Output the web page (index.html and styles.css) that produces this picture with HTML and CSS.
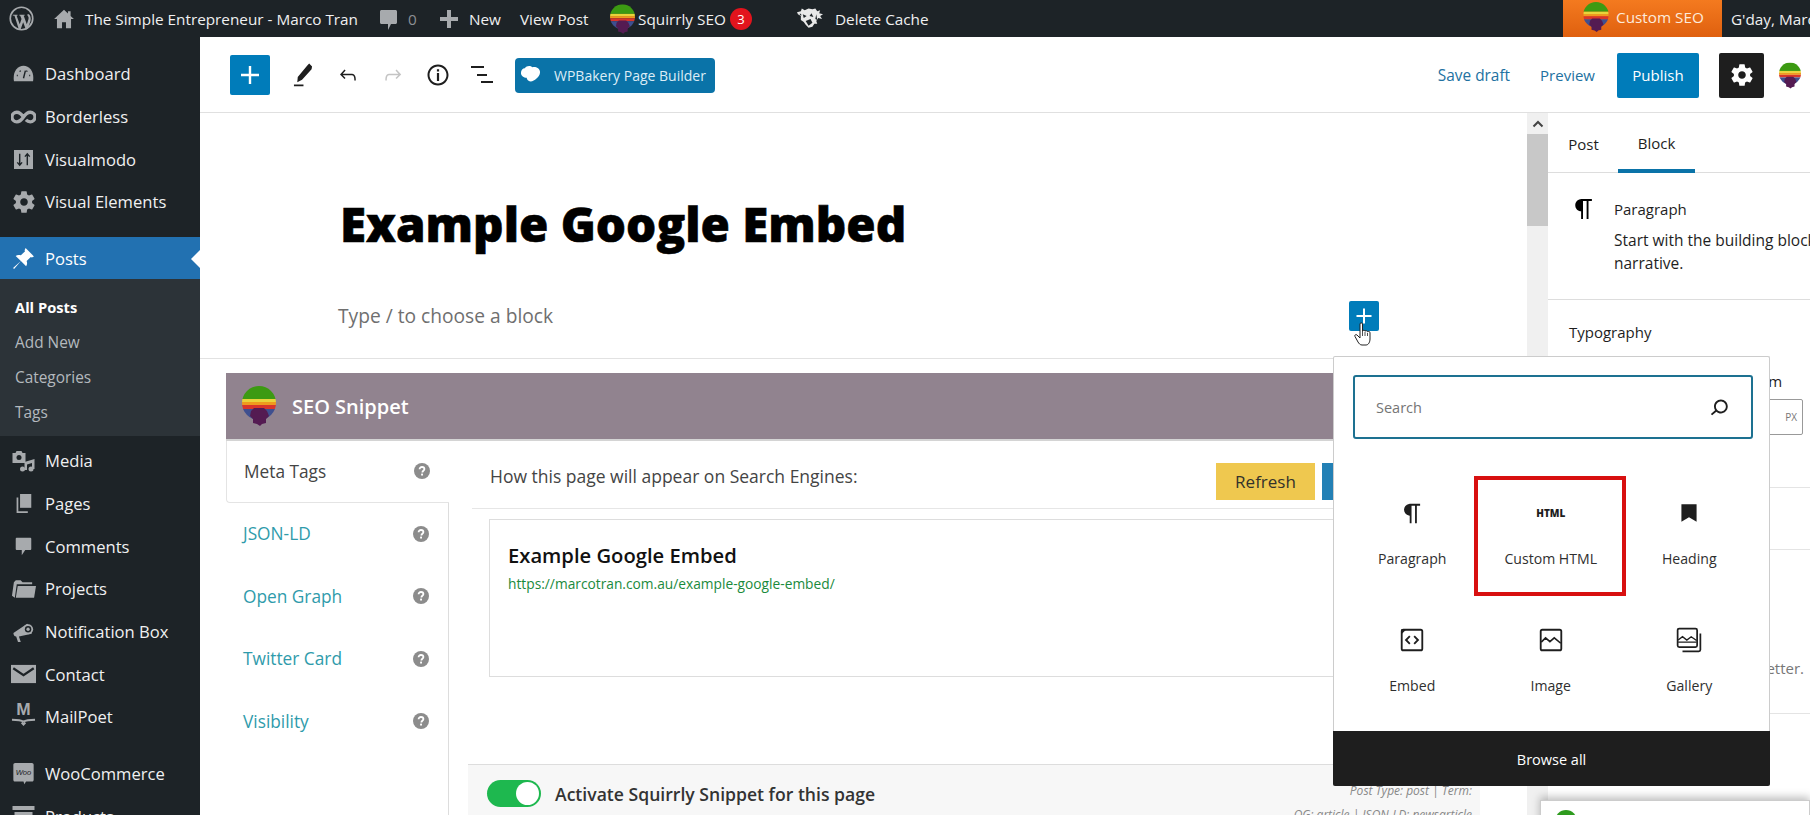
FILE: index.html
```html
<!DOCTYPE html>
<html lang="en">
<head>
  <meta charset="UTF-8">
  <title>Edit Post</title>
  <link rel="stylesheet" href="styles.css">
</head>
<body>
  <svg class="defs" width="0" height="0">
    <defs>
      <clipPath id="logoClip"><circle cx="17" cy="17" r="17"/></clipPath>
      <symbol id="squirrly" viewBox="0 0 34 40">
        <g clip-path="url(#logoClip)">
          <rect width="34" height="13" fill="#3c9a12"/>
          <rect y="13" width="34" height="3" fill="#e9d33a"/>
          <rect y="16" width="34" height="3" fill="#ee9a1e"/>
          <rect y="19" width="34" height="4" fill="#d8352a"/>
          <rect y="23" width="34" height="11" fill="#3f4f8f"/>
        </g>
        <path d="M9 25l3-3h10l3 3 2 5-3 3v4l-4 1-2 2-3-2-4-1v-4l-3-3z" fill="#541b52"/>
      </symbol>
      <symbol id="cog" viewBox="0 0 24 24">
        <path d="M19.43 12.98c.04-.32.07-.64.07-.98s-.03-.66-.07-.98l2.11-1.65c.19-.15.24-.42.12-.64l-2-3.46c-.12-.22-.39-.3-.61-.22l-2.49 1c-.52-.4-1.08-.73-1.69-.98l-.38-2.65C14.46 2.18 14.25 2 14 2h-4c-.25 0-.46.18-.49.42l-.38 2.65c-.61.25-1.17.59-1.69.98l-2.49-1c-.23-.09-.49 0-.61.22l-2 3.46c-.13.22-.07.49.12.64l2.11 1.65c-.04.32-.07.65-.07.98s.03.66.07.98l-2.11 1.65c-.19.15-.24.42-.12.64l2 3.46c.12.22.39.3.61.22l2.49-1c.52.4 1.08.73 1.69.98l.38 2.65c.03.24.24.42.49.42h4c.25 0 .46-.18.49-.42l.38-2.65c.61-.25 1.17-.59 1.69-.98l2.49 1c.23.09.49 0 .61-.22l2-3.46c.12-.22.07-.49-.12-.64l-2.11-1.65zM12 15.5c-1.93 0-3.5-1.57-3.5-3.5s1.57-3.5 3.5-3.5 3.5 1.57 3.5 3.5-1.57 3.5-3.5 3.5z"/>
      </symbol>
      <symbol id="para" viewBox="0 0 24 24">
        <path d="M18.3 4H9.9v-.1l-.9.2c-2.3.4-4 2.4-4 4.8s1.7 4.4 4 4.8l.7.1V20h1.5V5.5h2.9V20h1.5V5.5h2.7V4z"/>
      </symbol>
      <symbol id="help" viewBox="0 0 16 16">
        <circle cx="8" cy="8" r="8" fill="#8c8c8c"/>
        <path d="M5.6 6.2c0-1.4 1-2.2 2.4-2.2s2.4.8 2.4 2c0 1.8-2 1.7-2 3.4" fill="none" stroke="#fff" stroke-width="1.8"/>
        <rect x="7.1" y="10.6" width="1.9" height="1.9" fill="#fff"/>
      </symbol>
      <symbol id="plus" viewBox="0 0 24 24">
        <path d="M18 11.2h-5.2V6h-1.6v5.2H6v1.6h5.2V18h1.6v-5.2H18z"/>
      </symbol>
    </defs>
  </svg>

  <header class="adminbar">
    <svg class="ab-wp" viewBox="0 0 24 24"><circle cx="12" cy="12" r="10.8" fill="none" stroke="#a7aaad" stroke-width="1.6"/><path d="M3.6 8.4h4.6l.1.7-1 .2 3 8.2 1.7-5-1.2-3.2-.9-.2v-.7h5.2v.7l-1 .2 3 8.2 1.500-4.600c.7-2-.2-3-.8-3.800-.4-.6-.2-1.400.7-1.400l1.400 1c1.200 2.200 1.200 4.400.6 6.300l-2.600 7.200-1.700.4-2.600-7-2.500 7-1.700-.2L5.300 9.300l-1.700-.2z" fill="#a7aaad"/></svg>
    <svg class="ab-home" viewBox="0 0 20 20"><path d="M10 1.500L1 10h2.600v8.500h4.600v-5.500h3.600v5.500h4.600V10H19l-3-2.800V3h-2.400v2z" fill="#a7aaad"/></svg>
    <span class="ab-title">The Simple Entrepreneur - Marco Tran</span>
    <svg class="ab-comment" viewBox="0 0 17 20"><path d="M1.500 0h14c.8 0 1.500.7 1.500 1.500v11c0 .8-.7 1.500-1.500 1.500H11l-3 6v-6H1.500C.7 14 0 13.300 0 12.500v-11C0 .7.700 0 1.500 0z" fill="#a7aaad"/></svg>
    <span class="ab-count">0</span>
    <svg class="ab-plus" viewBox="0 0 18 18"><path d="M7 0h4v7h7v4h-7v7H7v-7H0V7h7z" fill="#a7aaad"/></svg>
    <span class="ab-new">New</span>
    <span class="ab-view">View Post</span>
    <svg class="ab-logo"><use href="#squirrly"/></svg>
    <span class="ab-squirrly">Squirrly SEO</span>
    <span class="ab-badge">3</span>
    <svg class="ab-tiger" viewBox="0 0 28 22"><path d="M0 4l4-1 1-3 3 2 4-2 4 1 3-1 2 3 3-1-1 3 4 1-3 2 2 3-4-1-2 3 1 3-3 0-2 3-4 1-3-3-2-3-3-2 0-4-3-2z" fill="#e8e8e8"/><path d="M6 6l4 2-3 2zM15 5l-2 3 4 1zM9 13l5-2 2 4-4 3zM20 6l1 6-2-1zM3 5l2 2-2 0z" fill="#1d2327"/></svg>
    <span class="ab-cache">Delete Cache</span>
    <div class="ab-right">
      <div class="ab-custom">
        <svg class="ab-custom-logo"><use href="#squirrly"/></svg>
        <span>Custom SEO</span>
      </div>
      <span class="ab-user">G'day, Marco Tran</span>
    </div>
  </header>

  <div class="layout">
    <nav class="sidebar">
      <a class="nav-item">
        <svg class="nav-icon" viewBox="0 0 22 18"><path d="M1 17C-.5 8 4 1 11 1s11.500 7 10 16z" fill="#a7aaad"/><path d="M11 14l2-8M4 11h1M17 11h1M7 6l1 1M15 6l-1 1" stroke="#1d2327" stroke-width="1.500"/></svg>
        Dashboard
      </a>
      <a class="nav-item">
        <svg class="nav-icon nav-icon-wide" viewBox="0 0 26 14"><path d="M13 7c-2-3-4-5-7-5a5 5 0 0 0 0 10c3 0 5-2 7-5s4-5 7-5a5 5 0 0 1 0 10c-2 0-3.500-1-4.500-2" fill="none" stroke="#a7aaad" stroke-width="3.500"/></svg>
        Borderless
      </a>
      <a class="nav-item">
        <svg class="nav-icon" viewBox="0 0 20 20"><rect width="20" height="20" fill="#a7aaad"/><path d="M6 4v12M3.500 13L6 16l2.500-3M14 16V4M11.500 7L14 4l2.500 3" fill="none" stroke="#1d2327" stroke-width="1.500"/></svg>
        Visualmodo
      </a>
      <a class="nav-item">
        <svg class="nav-icon nav-icon-gear"><use href="#cog"/></svg>
        Visual Elements
      </a>
      <a class="nav-item is-current">
        <svg class="nav-icon nav-icon-pin" viewBox="0 0 22 22"><path d="M13 1l8 8-2 1-1-.500-4 4c.8 2 .5 3.500-.5 5L8.500 13.500 2 21l-1-1 7.500-6.500L3.500 8.500c1.500-1 3-1.300 5-.5l4-4-.5-1z" fill="#fff"/></svg>
        Posts
      </a>
      <div class="nav-sub">
        <a class="sub-item is-active">All Posts</a>
        <a class="sub-item">Add New</a>
        <a class="sub-item">Categories</a>
        <a class="sub-item">Tags</a>
      </div>
      <a class="nav-item nav-media">
        <svg class="nav-icon nav-icon-wide" viewBox="0 0 24 22"><path d="M1 3h3l1-2h5l1 2h3v10H1z" fill="#a7aaad"/><circle cx="7.500" cy="7.500" r="2.500" fill="#1d2327"/><path d="M13 12l10-3v10h-2.500v-6l-5 1.500V20h-2.500z" fill="#a7aaad"/><circle cx="11" cy="19" r="2.500" fill="#a7aaad"/><circle cx="19.500" cy="19" r="2.500" fill="#a7aaad"/></svg>
        Media
      </a>
      <a class="nav-item">
        <svg class="nav-icon" viewBox="0 0 20 22"><path d="M6 0h13v16H6z" fill="#a7aaad"/><path d="M3 4v17h12" fill="none" stroke="#a7aaad" stroke-width="2"/></svg>
        Pages
      </a>
      <a class="nav-item">
        <svg class="nav-icon" viewBox="0 0 20 22"><path d="M2 1h16c.6 0 1 .4 1 1v12c0 .6-.4 1-1 1h-6l-4 6v-6H2c-.6 0-1-.4-1-1V2c0-.6.4-1 1-1z" fill="#a7aaad"/></svg>
        Comments
      </a>
      <a class="nav-item">
        <svg class="nav-icon nav-icon-wide" viewBox="0 0 26 20"><path d="M3 3l2-2h5l2 2h10v2H6L4 19 1 17z" fill="#a7aaad"/><path d="M7 7h19l-2 12H5z" fill="#a7aaad"/></svg>
        Projects
      </a>
      <a class="nav-item">
        <svg class="nav-icon nav-icon-wide" viewBox="0 0 24 24"><path d="M1 13l15-10c3 2 5 7 5 11L7 17l2 6H6l-2-6c-2 0-3-2-3-4z" fill="#a7aaad"/><circle cx="17" cy="9" r="5.500" fill="#a7aaad"/><circle cx="17" cy="9" r="3.500" fill="#1d2327"/><circle cx="17" cy="9" r="1.800" fill="#a7aaad"/></svg>
        Notification Box
      </a>
      <a class="nav-item">
        <svg class="nav-icon nav-icon-wide" viewBox="0 0 22 16"><rect width="22" height="16" fill="#a7aaad"/><path d="M2 3l9 6 9-6" fill="none" stroke="#1d2327" stroke-width="2"/></svg>
        Contact
      </a>
      <a class="nav-item">
        <svg class="nav-icon nav-icon-tall" viewBox="0 0 26 26"><text class="mail-m" x="13" y="15" text-anchor="middle">M</text><path d="M1 20c4 0 9 0 12 2 3-2 8-2 12-2M11 23l2 2 2-2" fill="none" stroke="#a7aaad" stroke-width="2"/></svg>
        MailPoet
      </a>
      <a class="nav-item nav-woo">
        <svg class="nav-icon nav-icon-wide" viewBox="0 0 24 26"><path d="M2 0h20c1 0 2 1 2 2v18c0 1-1 2-2 2h-7l-2 3-1-3H2c-1 0-2-1-2-2V2C0 1 1 0 2 0z" fill="#a7aaad"/><text class="woo-text" x="12" y="14" text-anchor="middle">Woo</text></svg>
        WooCommerce
      </a>
      <a class="nav-item">
        <svg class="nav-icon nav-icon-wide" viewBox="0 0 24 22"><path d="M1 1h22v4H1zM3 7h18v14H3z" fill="#a7aaad"/></svg>
        Products
      </a>
    </nav>

    <main class="main">
      <div class="toolbar">
        <button class="tool-add"><svg viewBox="0 0 24 24"><use href="#plus"/></svg></button>
        <svg class="tool-pen" viewBox="0 0 21 24"><path d="M1 22h10v1.800H1zM17 0l3 3-.5 3-10 11-5 2.500.5-5.500 10-12z"/></svg>
        <svg class="tool-icon tool-undo" viewBox="0 0 24 24"><path d="M18.300 11.700c-.6-.6-1.400-.9-2.300-.9H6.700l2.900-3.300-1.100-1-4.500 5L8.500 16l1-1-2.700-2.700H16c.5 0 .9.200 1.300.5 1 1 1 3.400 1 4.500v.3h1.500v-.2c0-1.500 0-4.300-1.500-5.700z"/></svg>
        <svg class="tool-icon tool-redo" viewBox="0 0 24 24"><path d="M15.600 6.500l-1.100 1 2.900 3.300H8c-.9 0-1.700.3-2.300.9-1.400 1.500-1.400 4.200-1.400 5.600v.2h1.500v-.3c0-1.100 0-3.500 1-4.500.3-.3.7-.5 1.300-.5h9.200L14.500 15l1.100 1.100 4.600-4.600-4.600-5z"/></svg>
        <svg class="tool-icon tool-info" viewBox="0 0 24 24"><path d="M12 1.500C6.200 1.500 1.500 6.200 1.500 12S6.200 22.500 12 22.500 22.500 17.800 22.500 12 17.800 1.500 12 1.500zm0 19c-4.700 0-8.500-3.800-8.500-8.500S7.300 3.500 12 3.500s8.500 3.800 8.500 8.500-3.800 8.500-8.500 8.500zM10.900 18h2.200v-8h-2.200zm0-9.500h2.200V6.300h-2.200z"/></svg>
        <svg class="tool-icon tool-list" viewBox="0 0 24 24"><path d="M1 3h13v2H1zM7 11h10v2H7zM11 18h12v2H11z"/></svg>
        <button class="tool-bakery">
          <svg viewBox="0 0 22 18"><path d="M5 2c2-3 6-3 8-1 3-1 8 1 8 5 0 3-2 5-4 7-2 2-6 4-8 2-1 0-2-2-2-3-3 0-6-2-6-5 0-3 2-5 4-5z" fill="#fff"/></svg>
          WPBakery Page Builder
        </button>
        <div class="tool-right">
          <a class="tool-link tool-save">Save draft</a>
          <a class="tool-link">Preview</a>
          <button class="tool-publish">Publish</button>
          <button class="tool-settings"><svg viewBox="0 0 24 24"><use href="#cog"/></svg></button>
          <svg class="tool-logo"><use href="#squirrly"/></svg>
        </div>
      </div>

      <div class="workspace">
        <div class="editor">
          <section class="post-head">
            <h1 class="post-title">Example Google Embed</h1>
            <div class="block-line">
              <span class="block-hint">Type / to choose a block</span>
              <button class="inline-add"><svg viewBox="0 0 24 24"><use href="#plus"/></svg></button>
            </div>
          </section>

          <section class="snippet">
            <div class="snippet-head">
              <svg class="snippet-logo"><use href="#squirrly"/></svg>
              <span>SEO Snippet</span>
            </div>
            <div class="snippet-body">
              <ul class="snippet-tabs">
                <li class="snippet-tab is-active">Meta Tags <svg class="help"><use href="#help"/></svg></li>
                <li class="snippet-tab">JSON-LD <svg class="help"><use href="#help"/></svg></li>
                <li class="snippet-tab">Open Graph <svg class="help"><use href="#help"/></svg></li>
                <li class="snippet-tab">Twitter Card <svg class="help"><use href="#help"/></svg></li>
                <li class="snippet-tab">Visibility <svg class="help"><use href="#help"/></svg></li>
              </ul>
              <div class="snippet-main">
                <div class="snippet-top">
                  <span class="snippet-question">How this page will appear on Search Engines:</span>
                  <div class="snippet-actions">
                    <button class="btn-refresh">Refresh</button>
                    <button class="btn-edit">Edit Snippet</button>
                  </div>
                </div>
                <div class="serp-card">
                  <div class="serp-title">Example Google Embed</div>
                  <div class="serp-url">https://marcotran.com.au/example-google-embed/</div>
                </div>
                <div class="activate-bar">
                  <span class="toggle"></span>
                  <span class="activate-label">Activate Squirrly Snippet for this page</span>
                  <div class="activate-meta">
                    <div>Post Type: post | Term:</div>
                    <div>OG: article | JSON-LD: newsarticle</div>
                  </div>
                </div>
              </div>
            </div>
          </section>
        </div>

        <div class="scrollbar">
          <div class="scroll-arrow"><svg viewBox="0 0 12 8"><path d="M1.500 6.500L6 2l4.500 4.500" fill="none" stroke="#444" stroke-width="2"/></svg></div>
          <div class="scroll-thumb"></div>
        </div>

        <aside class="panel">
          <div class="panel-tabs">
            <span class="panel-tab">Post</span>
            <span class="panel-tab is-active">Block</span>
          </div>
          <div class="panel-card">
            <svg class="panel-card-icon"><use href="#para"/></svg>
            <div>
              <div class="panel-card-name">Paragraph</div>
              <p class="panel-card-text">Start with the building block of all<br>narrative.</p>
            </div>
          </div>
          <div class="panel-section panel-type">
            <div class="panel-heading">Typography</div>
            <div class="panel-field-label">Custom</div>
            <div class="panel-field"><span>PX</span></div>
          </div>
          <div class="panel-section panel-color"></div>
          <div class="panel-section panel-adv">
            <div class="panel-adv-text">Drop cap letter.</div>
          </div>
        </aside>
      </div>
    </main>
  </div>

  <div class="inserter">
    <div class="inserter-search">
      <span>Search</span>
      <svg viewBox="0 0 24 24"><path d="M13.500 6C10.500 6 8 8.500 8 11.500c0 1.100.3 2.100.9 3l-3.400 3 1 1.100 3.400-2.900c1 .9 2.200 1.400 3.600 1.400 3 0 5.500-2.500 5.500-5.500C19 8.500 16.500 6 13.500 6zm0 9.500c-2.200 0-4-1.800-4-4s1.800-4 4-4 4 1.800 4 4-1.800 4-4 4z"/></svg>
    </div>
    <div class="inserter-grid">
      <div class="inserter-item">
        <svg class="inserter-icon icon-para"><use href="#para"/></svg>
        <span>Paragraph</span>
      </div>
      <div class="inserter-item is-marked">
        <span class="inserter-icon html-icon">HTML</span>
        <span>Custom HTML</span>
      </div>
      <div class="inserter-item">
        <svg class="inserter-icon" viewBox="0 0 24 24"><path d="M5 4h14v16l-7-4-7 4z"/></svg>
        <span>Heading</span>
      </div>
      <div class="inserter-item">
        <svg class="inserter-icon" viewBox="0 0 24 24"><rect x="2.500" y="2.500" width="19" height="19" rx="1.500" fill="none" stroke="#1e1e1e" stroke-width="1.700"/><path d="M2 2h5L2 7z"/><path d="M10 8.500L6.500 12l3.500 3.500M14 8.500l3.500 3.500-3.500 3.500" fill="none" stroke="#1e1e1e" stroke-width="1.700"/></svg>
        <span>Embed</span>
      </div>
      <div class="inserter-item">
        <svg class="inserter-icon" viewBox="0 0 24 24"><rect x="2.500" y="2.500" width="19" height="19" rx="1.500" fill="none" stroke="#1e1e1e" stroke-width="1.700"/><path d="M3 14l4-4 4 3.500 4-3.500 6 5" fill="none" stroke="#1e1e1e" stroke-width="1.500"/></svg>
        <span>Image</span>
      </div>
      <div class="inserter-item">
        <svg class="inserter-icon" viewBox="0 0 24 24"><rect x="1.500" y="1.500" width="18" height="17" rx="1.500" fill="none" stroke="#1e1e1e" stroke-width="1.600"/><path d="M2 12l4-3 4 3 4-3 5 3.500M2 14h17" fill="none" stroke="#1e1e1e" stroke-width="1.300"/><path d="M22.500 6v15c0 .8-.5 1.500-1.500 1.500H6" fill="none" stroke="#1e1e1e" stroke-width="1.600"/></svg>
        <span>Gallery</span>
      </div>
    </div>
    <button class="inserter-browse">Browse all</button>
  </div>

  <svg class="hand-cursor" viewBox="0 0 18 24"><path d="M6 2c0-1.500 2.500-1.500 2.500 0v7c.5-1 2.500-1 2.500.3.500-1 2.500-.8 2.500.5.800-.8 2.500-.5 2.500 1V17c0 3-1.500 6-4 6H8c-2 0-3-1.500-4-3L1 14.500c-.8-1.500 1-2.500 2-1.500l3 3z" fill="#fff" stroke="#222" stroke-width="1"/><path d="M8.500 9v5M11 10v4M13.500 11v3" stroke="#222" stroke-width=".8"/></svg>

  <div class="notice"><span class="notice-dot"></span></div>
</body>
</html>
```

FILE: styles.css
```css
* {
  box-sizing: border-box;
}
html, body {
  height: 815px;
  overflow: hidden;
}
body {
  margin: 0;
  font-family: "Open Sans", "Noto Sans", sans-serif;
  background: #fff;
  color: #1e1e1e;
}
button {
  font-family: inherit;
  border: none;
  cursor: pointer;
}
.defs {
  position: absolute;
}

/* admin bar */
.adminbar {
  display: flex;
  align-items: center;
  height: 37px;
  background: #1d2327;
  color: #f0f0f1;
  font-size: 15.300px;
  white-space: nowrap;
}
.ab-wp { width: 25px; height: 25px; margin-left: 9px; }
.ab-home { width: 22px; height: 22px; margin-left: 19px; }
.ab-title { margin-left: 10px; width: 274px; }
.ab-comment { width: 17px; height: 20px; margin-left: 21px; margin-top: 2px; }
.ab-count { margin-left: 11px; color: #8c8f94; width: 10px; }
.ab-plus { width: 18px; height: 18px; margin-left: 22px; }
.ab-new { margin-left: 11px; width: 33px; }
.ab-view { margin-left: 18px; width: 70px; }
.ab-logo { width: 25px; height: 30px; margin-left: 20px; }
.ab-squirrly { margin-left: 3px; width: 88px; }
.ab-badge {
  display: flex;
  align-items: center;
  justify-content: center;
  width: 22px;
  height: 22px;
  margin-left: 4px;
  border-radius: 50%;
  background: #e2141d;
  color: #fff;
  font-size: 13px;
}
.ab-tiger { width: 27px; height: 22px; margin-left: 45px; }
.ab-cache { margin-left: 11px; }
.ab-right {
  display: flex;
  align-items: center;
  margin-left: auto;
  width: 247px;
  overflow: hidden;
}
.ab-custom {
  display: flex;
  align-items: center;
  flex: none;
  gap: 7px;
  width: 159px;
  height: 37px;
  padding-left: 20px;
  background: linear-gradient(#f47a1f, #df600f);
  color: #fdeadb;
  padding-bottom: 3px;
}
.ab-custom-logo { width: 26px; height: 30px; }
.ab-user { margin-left: 9px; }

.layout {
  display: flex;
  height: 778px;
}

/* left menu */
.sidebar {
  flex: none;
  width: 200px;
  padding-top: 15.500px;
  background: #1d2327;
  color: #f0f0f1;
  overflow: hidden;
}
.nav-item {
  display: flex;
  align-items: center;
  height: 42.7px;
  font-size: 16.600px;
  position: relative;
}
.nav-icon {
  flex: none;
  width: 21px;
  height: 19px;
  margin: 0 11px 0 13px;
}
.nav-icon-wide {
  width: 25px;
  height: 22px;
  margin: 0 9px 0 11px;
}
.nav-icon-tall {
  width: 25px;
  height: 28px;
  margin: -8px 9px 0 11px;
}
.nav-icon-gear {
  width: 26px;
  height: 26px;
  margin: 0 8px 0 11px;
  fill: #a7aaad;
}
.nav-icon-pin {
  width: 23px;
  height: 23px;
  margin: 0 10px 0 12px;
}
.nav-item.is-current {
  margin-top: 13.500px;
  background: #2271b1;
  color: #fff;
}
.nav-item.is-current::after {
  content: "";
  position: absolute;
  right: 0;
  top: 13px;
  border: 9px solid transparent;
  border-right-color: #fff;
  border-left: none;
}
.nav-sub {
  padding: 10.500px 0 6.500px;
  background: #2c3338;
}
.sub-item {
  display: flex;
  align-items: center;
  height: 35px;
  padding-left: 15px;
  font-size: 15.400px;
  color: #b4b9be;
}
.sub-item.is-active {
  font-size: 14.700px;
  font-weight: 700;
  color: #fff;
}
.nav-media { margin-top: 3px; }
.nav-woo { margin-top: 14px; }
.mail-m {
  font-family: "Liberation Sans", sans-serif;
  font-weight: 700;
  font-size: 18px;
  fill: #a7aaad;
}
.woo-text {
  font-family: "Liberation Sans", sans-serif;
  font-style: italic;
  font-size: 9px;
  fill: #1d2327;
}

.main {
  flex: 1;
  min-width: 0;
  display: flex;
  flex-direction: column;
}

/* editor toolbar */
.toolbar {
  display: flex;
  align-items: center;
  flex: none;
  height: 76px;
  padding-left: 30px;
  border-bottom: 1px solid #e0e0e0;
}
.tool-add {
  display: flex;
  align-items: center;
  justify-content: center;
  width: 40px;
  height: 40px;
  padding: 0;
  border-radius: 2px;
  background: #007cba;
}
.tool-add svg { width: 36px; height: 36px; fill: #fff; }
.tool-icon { width: 24px; height: 24px; fill: #1e1e1e; flex: none; }
.tool-pen { flex: none; width: 20px; height: 24px; margin-left: 23px; fill: #1e1e1e; }
.tool-undo { margin-left: 23px; }
.tool-redo { margin-left: 21px; fill: #c4c4c4; }
.tool-info { margin-left: 21px; }
.tool-list { margin-left: 20px; }
.tool-bakery {
  display: flex;
  align-items: center;
  gap: 13px;
  width: 200px;
  height: 35px;
  margin: 1px 0 0 21px;
  padding: 0 0 0 5px;
  border-radius: 4px;
  background: #0a73a8;
  color: #dcedf6;
  font-size: 14px;
}
.tool-bakery svg { width: 21px; height: 18px; flex: none; }
.tool-right {
  display: flex;
  align-items: center;
  margin: 1px 0 0 auto;
}
.tool-link {
  color: #2271a1;
  font-size: 15px;
  margin-right: 22px;
}
.tool-save { margin-right: 30px; font-size: 15.400px; }
.tool-publish {
  width: 82px;
  height: 45px;
  margin-right: 20px;
  border-radius: 2px;
  background: #007cba;
  color: #fff;
  font-size: 15px;
}
.tool-settings {
  display: flex;
  align-items: center;
  justify-content: center;
  width: 45px;
  height: 45px;
  padding: 0;
  margin-right: 15px;
  border-radius: 2px;
  background: #1e1e1e;
}
.tool-settings svg { width: 26px; height: 26px; fill: #fff; }
.tool-logo { width: 22px; height: 27px; margin-right: 9px; }

.workspace {
  display: flex;
  flex: 1;
  min-height: 0;
}
.editor {
  flex: none;
  width: 1327px;
  overflow: hidden;
}

/* post title area */
.post-head {
  height: 246px;
  padding: 78px 0 0 139px;
  border-bottom: 1px solid #e2e2e2;
}
.post-title {
  margin: 0 0 0 1px;
  font-size: 47.500px;
  font-weight: 800;
  line-height: 66px;
  color: #000;
  -webkit-text-stroke: 0.6px #000;
}
.block-line {
  display: flex;
  align-items: center;
  justify-content: space-between;
  height: 30px;
  margin-top: 44px;
  padding-right: 148px;
}
.block-hint {
  margin: -2px 0 0 -1px;
  font-size: 19.200px;
  color: #6f6f6f;
}
.inline-add {
  display: flex;
  align-items: center;
  justify-content: center;
  width: 30px;
  height: 30px;
  padding: 0;
  border-radius: 2px;
  background: #007cba;
}
.inline-add svg { width: 30px; height: 30px; fill: #fff; }

/* seo snippet */
.snippet {
  width: 1254px;
  margin: 14px 0 0 26px;
}
.snippet-head {
  display: flex;
  align-items: center;
  gap: 16px;
  height: 68px;
  padding-left: 16px;
  background: #91838f;
  border-bottom: 2px solid #d4d4d4;
  color: #fff;
  font-size: 20px;
  font-weight: 600;
}
.snippet-logo { width: 34px; height: 40px; }
.snippet-body { display: flex; }
.snippet-tabs {
  flex: none;
  width: 223px;
  height: 400px;
  margin: 0;
  padding: 0;
  list-style: none;
  border-right: 1px solid #ddd;
}
.snippet-tab {
  display: flex;
  align-items: center;
  justify-content: space-between;
  height: 62.500px;
  padding: 0 19px 0 17px;
  font-size: 17.300px;
  color: #2f9bab;
}
.snippet-tab.is-active {
  height: 61.500px;
  margin-right: -1px;
  background: #fff;
  border: 1px solid #e4e4e4;
  border-top: none;
  border-right: none;
  border-radius: 0 0 0 4px;
  color: #444;
}
.help { width: 16px; height: 16px; flex: none; }
.snippet-main {
  flex: 1;
  min-width: 0;
}
.snippet-top {
  display: flex;
  align-items: center;
  justify-content: space-between;
  height: 68px;
  margin-left: 23px;
  padding-left: 18px;
  border-bottom: 1px solid #e6e6e6;
}
.snippet-question {
  margin-top: 2px;
  font-size: 17.500px;
  color: #444;
}
.snippet-actions {
  display: flex;
  gap: 7px;
  margin-top: 13px;
}
.btn-refresh {
  width: 99px;
  height: 37px;
  background: #efc84f;
  color: #33322b;
  font-size: 17px;
}
.btn-edit {
  width: 158px;
  height: 37px;
  background: #2380b5;
  color: #fff;
  font-size: 17px;
  white-space: nowrap;
}
.serp-card {
  height: 158px;
  margin: 10px 20px 0 40px;
  padding: 20px 18px;
  border: 1px solid #ddd;
}
.serp-title {
  font-size: 20.200px;
  font-weight: 600;
  line-height: 30px;
  color: #111;
}
.serp-url {
  margin-top: 1px;
  font-size: 13.750px;
  line-height: 26px;
  color: #1a8a3c;
}
.activate-bar {
  display: flex;
  align-items: center;
  height: 60px;
  margin: 87px 0 0 19px;
  padding: 0 8px 2px 19px;
  background: #f7f7f7;
  border-top: 1px solid #ddd;
}
.toggle {
  position: relative;
  width: 54px;
  height: 27px;
  border-radius: 14px;
  background: #1eb84f;
}
.toggle::after {
  content: "";
  position: absolute;
  right: 2px;
  top: 2px;
  width: 23px;
  height: 23px;
  border-radius: 50%;
  background: #fff;
}
.activate-label {
  margin-left: 14px;
  font-size: 17.600px;
  font-weight: 600;
  color: #333;
}
.activate-meta {
  align-self: flex-start;
  margin: 14px 0 0 auto;
  text-align: right;
  font-size: 12px;
  font-style: italic;
  line-height: 24px;
  color: #888;
}

/* scrollbar */
.scrollbar {
  flex: none;
  width: 21px;
  background: #f0f0f0;
}
.scroll-arrow {
  display: flex;
  align-items: center;
  justify-content: center;
  height: 21px;
}
.scroll-arrow svg { width: 12px; height: 8px; }
.scroll-thumb {
  height: 92px;
  background: #c8c8c8;
}

/* right panel */
.panel {
  flex: 1;
  min-width: 0;
  overflow: hidden;
  white-space: nowrap;
  font-size: 15px;
}
.panel-tabs {
  display: flex;
  height: 60px;
  padding-left: 4px;
  border-bottom: 1px solid #ddd;
}
.panel-tab {
  display: flex;
  align-items: center;
  justify-content: center;
  width: 63px;
  margin-right: 4px;
  padding-top: 2px;
  color: #1e1e1e;
}
.panel-tab.is-active {
  width: 77px;
  margin: 0 0 0 -1px;
  padding-top: 4px;
  border-bottom: 4px solid #0a73a8;
  height: 60px;
}
.panel-card {
  display: flex;
  gap: 15px;
  height: 127px;
  padding: 22px 0 0 21px;
  border-bottom: 1px solid #ddd;
}
.panel-card-icon { width: 30px; height: 30px; flex: none; margin-top: -1px; }
.panel-card-name { line-height: 28px; }
.panel-card-text { margin: 6px 0 0; font-size: 15.500px; line-height: 23px; }
.panel-section {
  padding-left: 21px;
  border-bottom: 1px solid #e4e4e4;
}
.panel-type { height: 188px; padding-top: 20px; }
.panel-heading { line-height: 24px; }
.panel-field-label {
  margin-top: 25px;
  padding-left: 159px;
  line-height: 24px;
}
.panel-field {
  display: flex;
  align-items: center;
  justify-content: flex-end;
  width: 234px;
  height: 36px;
  margin-top: 6px;
  padding-right: 5px;
  border: 1px solid #999;
  border-radius: 2px;
  color: #777;
  font-size: 10px;
}
.panel-color { height: 62px; }
.panel-adv { height: 164px; padding-top: 107px; }
.panel-adv-text {
  color: #777;
  line-height: 22px;
  text-align: right;
  padding-right: 6px;
}

/* block inserter */
.inserter {
  position: absolute;
  left: 1333px;
  top: 356px;
  width: 437px;
  height: 430px;
  display: flex;
  flex-direction: column;
  background: #fff;
  border: 1px solid #ccc;
  border-bottom: none;
  border-radius: 2px;
}
.inserter-search {
  display: flex;
  align-items: center;
  justify-content: space-between;
  flex: none;
  height: 64px;
  margin: 18px 16px 0 19px;
  padding: 0 20px 0 21px;
  border: 2.500px solid #1d7191;
  border-radius: 3px;
  font-size: 14.500px;
  color: #757575;
}
.inserter-search svg { width: 24px; height: 24px; fill: #1e1e1e; margin-top: -1px; transform: scale(1.250); }
.inserter-grid {
  display: grid;
  grid-template-columns: repeat(3, 138.500px);
  grid-auto-rows: 120px;
  row-gap: 7px;
  margin: 37px 0 0 9px;
}
.inserter-item {
  position: relative;
  display: flex;
  flex-direction: column;
  align-items: center;
  padding-top: 24px;
  font-size: 14.100px;
  color: #2f2f2f;
}
.inserter-icon {
  display: block;
  width: 26px;
  height: 26px;
  margin-bottom: 23px;
  fill: #1e1e1e;
}
.icon-para {
  width: 29px;
  height: 29px;
  margin: -1px 0 21px;
}
.html-icon {
  width: auto;
  font-size: 10px;
  font-weight: 800;
  line-height: 26px;
  color: #1e1e1e;
}
.is-marked::after {
  content: "";
  position: absolute;
  inset: 0 -6px 0 -8px;
  border: 4px solid #d81010;
}
.inserter-browse {
  flex: none;
  height: 55px;
  margin: 8px -1px 0;
  padding-top: 3px;
  background: #1e1e1e;
  color: #fff;
  font-size: 14.500px;
  border-radius: 0 0 2px 2px;
}

.hand-cursor {
  position: absolute;
  left: 1354px;
  top: 322px;
  width: 18px;
  height: 24px;
}
.notice {
  position: absolute;
  left: 1540px;
  top: 800px;
  width: 270px;
  height: 40px;
  background: #fff;
  border: 1px solid #ccc;
  box-shadow: 0 -3px 8px rgba(0, 0, 0, 0.25);
  overflow: hidden;
}
.notice-dot {
  display: block;
  width: 22px;
  height: 22px;
  margin: 9px 0 0 14px;
  border-radius: 50%;
  background: #2e9b1e;
}
```
